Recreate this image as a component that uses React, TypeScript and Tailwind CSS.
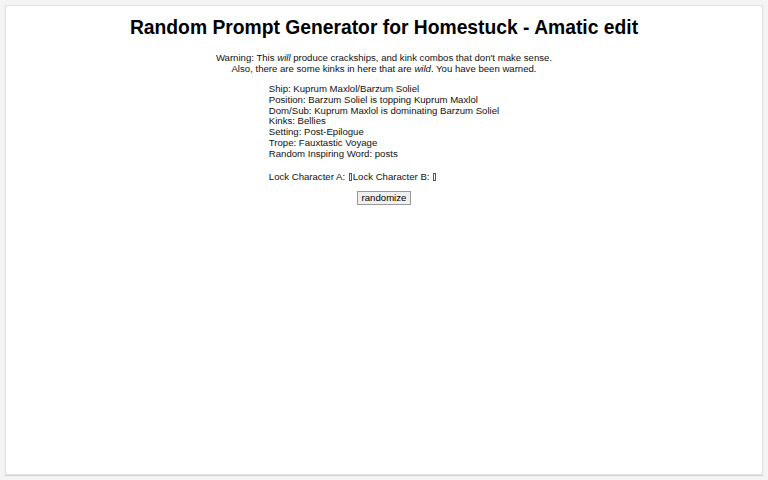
import React, { useState } from 'react';

const ships = [
    { a: 'Kuprum Maxlol', b: 'Barzum Soliel' },
];

function LockBox({ checked, onToggle }: { checked: boolean; onToggle: () => void }) {
    return (
        <span
            onClick={onToggle}
            className={`inline-block align-[-1px] w-[3px] h-[8px] mx-[1px] border border-[#555] ${checked ? 'bg-[#555]' : 'bg-white'}`}
        />
    );
}

export default function App() {
    const [lockA, setLockA] = useState(false);
    const [lockB, setLockB] = useState(false);
    const ship = ships[0];

    return (
        <div className="min-h-screen bg-[#f4f4f4] p-[5px] font-['Liberation_Sans',Arial,sans-serif] text-[#111]">
            <div className="h-[470px] bg-white border border-[#e2e2e2] shadow-[0_1px_1px_rgba(0,0,0,0.12)]">
                <h1 className="mt-[10px] text-center text-[19.3px] leading-[24px] font-bold text-black">
                    Random Prompt Generator for Homestuck - Amatic edit
                </h1>

                <div className="mt-[12px] text-center text-[9.6px] leading-[11px]">
                    <p>Warning: This <i>will</i> produce crackships, and kink combos that don't make sense.</p>
                    <p>Also, there are some kinks in here that are <i>wild</i>. You have been warned.</p>
                </div>

                <div className="mt-[10px] flex justify-center">
                    <div className="text-[9.6px] leading-[10.8px]">
                        <p>Ship: {ship.a}/{ship.b}</p>
                        <p>Position: {ship.b} is topping {ship.a}</p>
                        <p>Dom/Sub: {ship.a} is dominating {ship.b}</p>
                        <p>Kinks: Bellies</p>
                        <p>Setting: Post-Epilogue</p>
                        <p>Trope: Fauxtastic Voyage</p>
                        <p>Random Inspiring Word: posts</p>
                        <p className="mt-[12px]">
                            Lock Character A: <LockBox checked={lockA} onToggle={() => setLockA(!lockA)} />Lock Character B: <LockBox checked={lockB} onToggle={() => setLockB(!lockB)} />
                        </p>
                    </div>
                </div>

                <div className="mt-[9px] flex justify-center">
                    <button className="h-[14px] px-[4px] text-[9.6px] leading-[12px] bg-[#f0f0f0] border border-[#999] text-black">
                        randomize
                    </button>
                </div>
            </div>
        </div>
    );
}
